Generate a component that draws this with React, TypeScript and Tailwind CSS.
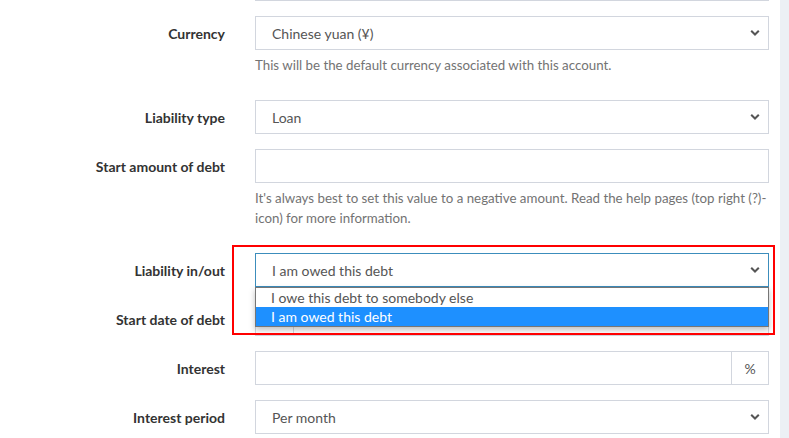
import React from "react"

const font = { fontFamily: "Lato, 'Noto Sans', sans-serif" }

function Chevron() {
  return (
    <svg width="10" height="7" viewBox="0 0 10 7" className="absolute right-[8px] top-1/2 -translate-y-1/2">
      <path d="M1.2 1.2 L5 5 L8.8 1.2" fill="none" stroke="#555" strokeWidth="2" />
    </svg>
  )
}

function Label({ children }: { children: React.ReactNode }) {
  return (
    <div className="w-[225px] h-[34px] shrink-0 flex items-center justify-end text-[14px] font-bold text-[#333]">
      {children}
    </div>
  )
}

function Select({ value, focused }: { value: string; focused?: boolean }) {
  return (
    <div
      className={`relative h-[34px] border bg-white flex items-center pl-[16px] text-[14px] text-[#555] ${
        focused ? "border-[#3c8dbc]" : "border-[#d2d6de]"
      }`}
    >
      {value}
      <Chevron />
    </div>
  )
}

function Help({ children }: { children: React.ReactNode }) {
  return <p className="mt-[5px] text-[13.3px] leading-5 text-[#737373]">{children}</p>
}

function Row({ label, children, last }: { label: string; children: React.ReactNode; last?: boolean }) {
  return (
    <div className={`flex ${last ? "" : "mb-[15px]"}`}>
      <Label>{label}</Label>
      <div className="ml-[30px] w-[514px] relative">{children}</div>
    </div>
  )
}

export default function App() {
  return (
    <div className="flex w-[789px] h-[438px] overflow-hidden" style={font}>
      <div className="w-[780px] bg-white relative">
        <div className="ml-[255px] w-[514px] h-px bg-[#d2d6de] mb-[15px]" />

        <Row label="Currency">
          <Select value="Chinese yuan (¥)" />
          <Help>This will be the default currency associated with this account.</Help>
          <div className="h-[10px]" />
        </Row>

        <Row label="Liability type">
          <Select value="Loan" />
        </Row>

        <Row label="Start amount of debt">
          <div className="h-[34px] border border-[#d2d6de] bg-white" />
          <Help>
            It's always best to set this value to a negative amount. Read the help pages (top right (?)-icon) for more
            information.
          </Help>
          <div className="h-[10px]" />
        </Row>

        <Row label="Liability in/out">
          <Select value="I am owed this debt" focused />
          <div className="absolute left-0 top-[34px] w-[514px] z-20 bg-white border border-[#767676] shadow-[0_3px_6px_rgba(0,0,0,0.25)] text-[14px]">
            <div className="h-[19px] pl-[15px] flex items-center text-[#555]">I owe this debt to somebody else</div>
            <div className="h-[19px] pl-[15px] flex items-center text-white bg-[#1e90ff]">I am owed this debt</div>
          </div>
        </Row>

        <Row label="Start date of debt">
          <div className="h-[34px] flex border border-[#d2d6de] bg-white">
            <div className="w-[38px] border-r border-[#d2d6de] flex items-center justify-center text-[#555]">
              <svg width="14" height="14" viewBox="0 0 14 14">
                <rect x="1" y="2" width="12" height="11" fill="none" stroke="#555" strokeWidth="1.4" />
                <path d="M1 5h12M4 0.5v3M10 0.5v3" stroke="#555" strokeWidth="1.4" />
              </svg>
            </div>
            <div className="flex-1" />
          </div>
        </Row>

        <Row label="Interest">
          <div className="h-[34px] flex border border-[#d2d6de] bg-white">
            <div className="flex-1" />
            <div className="w-[37px] border-l border-[#d2d6de] flex items-center justify-center text-[14px] text-[#555]">
              %
            </div>
          </div>
        </Row>

        <Row label="Interest period" last>
          <Select value="Per month" />
        </Row>

        <div className="absolute left-[232px] top-[245px] w-[543px] h-[90px] border-2 border-[#ff0000] z-30 pointer-events-none" />
      </div>
      <div className="flex-1 bg-[#ecf0f5]" />
    </div>
  )
}
